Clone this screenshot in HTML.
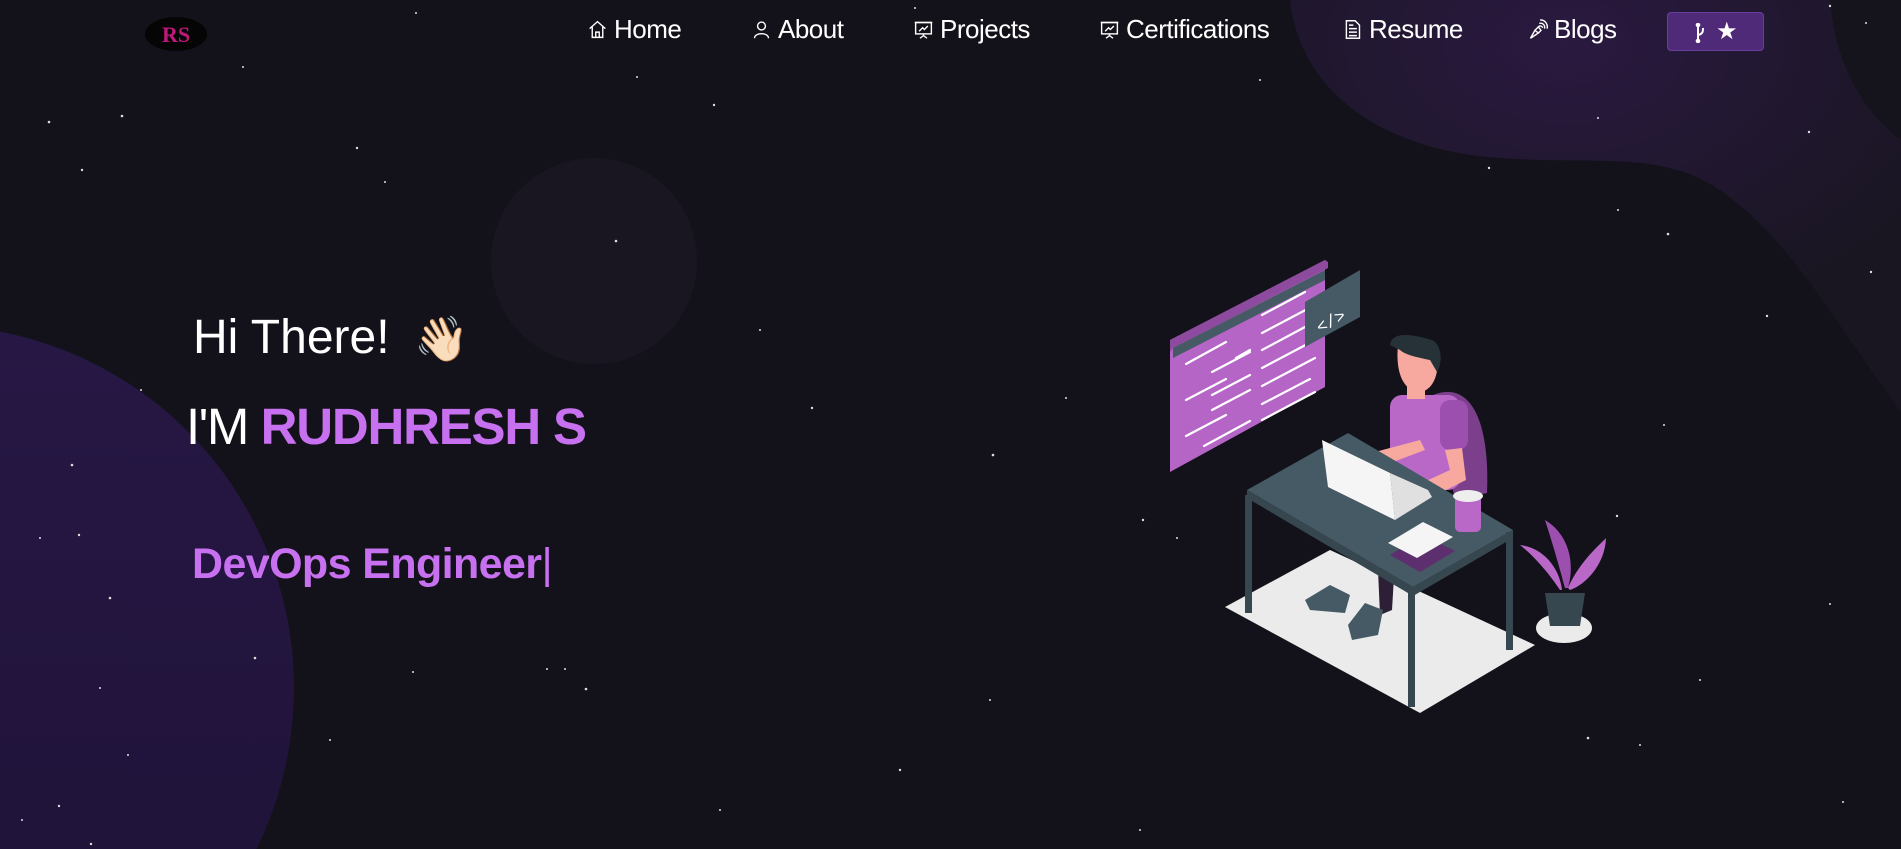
<!DOCTYPE html>
<html><head><meta charset="utf-8"><style>
*{margin:0;padding:0;box-sizing:border-box}
html,body{width:1901px;height:849px;overflow:hidden;background:#13121a;font-family:"Liberation Sans",sans-serif;position:relative}
#bg{position:absolute;left:0;top:0;display:block}
.nav{position:absolute;top:14px;color:#fff;font-size:26px;display:flex;align-items:center;gap:6px;letter-spacing:-0.5px}
.nav svg{width:21px;height:21px;fill:none;stroke:#fff;stroke-width:1.6}
.btn{position:absolute;left:1667px;top:12px;width:97px;height:39px;background:#4e2a78;border:1px solid #6a3d9c;border-radius:4px}
.t{position:absolute;white-space:nowrap}
</style></head><body>
<svg id="bg" width="1901" height="849" viewBox="0 0 1901 849">
<defs>
<radialGradient id="tr" cx="0.45" cy="0.1" r="0.7"><stop offset="0" stop-color="#2a1940"/><stop offset="1" stop-color="#191622"/></radialGradient>
<linearGradient id="lb" x1="0" y1="0" x2="0" y2="1"><stop offset="0" stop-color="#261744"/><stop offset="1" stop-color="#1e1236"/></linearGradient>
</defs>
<path d="M1290 0 C1300 90 1380 150 1500 158 C1600 165 1660 150 1720 190 C1790 240 1820 300 1901 412 L1901 0 Z" fill="url(#tr)"/>
<path d="M1830 0 C1835 60 1860 110 1901 140 L1901 0Z" fill="#15131c"/>
<circle cx="594" cy="261" r="103" fill="#191622"/>
<circle cx="-69" cy="688" r="363" fill="url(#lb)"/>
<g fill="#ddd">
<circle cx="49" cy="122" r="1.3"/><circle cx="122" cy="116" r="1.3"/><circle cx="243" cy="67" r="1"/><circle cx="385" cy="182" r="1"/><circle cx="616" cy="241" r="1.3"/><circle cx="82" cy="170" r="1.2"/><circle cx="72" cy="465" r="1.3"/><circle cx="79" cy="535" r="1.2"/><circle cx="40" cy="538" r="1"/><circle cx="110" cy="598" r="1.3"/><circle cx="141" cy="390" r="1"/><circle cx="100" cy="688" r="1"/><circle cx="128" cy="755" r="1"/><circle cx="59" cy="806" r="1.2"/><circle cx="91" cy="844" r="1.2"/><circle cx="268" cy="558" r="1"/><circle cx="255" cy="658" r="1.3"/><circle cx="586" cy="689" r="1.3"/><circle cx="565" cy="669" r="1"/><circle cx="547" cy="669" r="1"/><circle cx="413" cy="672" r="1"/><circle cx="357" cy="148" r="1.2"/><circle cx="416" cy="13" r="1"/><circle cx="637" cy="77" r="1"/><circle cx="714" cy="105" r="1.2"/><circle cx="760" cy="330" r="1"/><circle cx="812" cy="408" r="1.2"/><circle cx="993" cy="455" r="1.3"/><circle cx="1143" cy="520" r="1.2"/><circle cx="1177" cy="538" r="1"/><circle cx="1066" cy="398" r="1"/><circle cx="990" cy="700" r="1"/><circle cx="1588" cy="738" r="1.3"/><circle cx="1664" cy="425" r="1"/><circle cx="1617" cy="516" r="1.2"/><circle cx="1767" cy="316" r="1.2"/><circle cx="1668" cy="234" r="1.3"/><circle cx="1489" cy="168" r="1.2"/><circle cx="1618" cy="210" r="1"/><circle cx="1830" cy="6" r="1.2"/><circle cx="1866" cy="23" r="1"/><circle cx="1809" cy="132" r="1.2"/><circle cx="1598" cy="118" r="1"/><circle cx="1871" cy="272" r="1.2"/><circle cx="1830" cy="604" r="1"/><circle cx="1843" cy="802" r="1"/><circle cx="1640" cy="745" r="1"/><circle cx="1140" cy="830" r="1"/><circle cx="900" cy="770" r="1.2"/><circle cx="720" cy="810" r="1"/><circle cx="1700" cy="680" r="1"/><circle cx="1260" cy="80" r="1"/><circle cx="915" cy="8" r="1"/><circle cx="22" cy="820" r="1"/><circle cx="330" cy="740" r="1"/></g>
<polygon points="1225,607 1330,550 1535,645 1420,713" fill="#ebebeb"/>
<ellipse cx="1564" cy="628" rx="28" ry="15" fill="#ebebeb"/>
<polygon points="1170,340 1325,260 1325,387 1170,472" fill="#b565c6"/>
<polygon points="1170,340 1325,260 1328,262 1328,268 1173,348 1170,352" fill="#8e4a9e"/>
<polygon points="1173,348 1325,270 1325,280 1173,358" fill="#455a64"/>
<g stroke="#fff" stroke-width="2.2" stroke-linecap="round">
<line x1="1186" y1="364" x2="1226" y2="342"/><line x1="1212" y1="372" x2="1250" y2="352"/><line x1="1236" y1="358" x2="1250" y2="350"/><line x1="1186" y1="400" x2="1226" y2="379"/><line x1="1212" y1="395" x2="1250" y2="375"/><line x1="1186" y1="436" x2="1226" y2="415"/><line x1="1204" y1="446" x2="1250" y2="421"/><line x1="1262" y1="333" x2="1315" y2="305"/><line x1="1262" y1="350" x2="1305" y2="327"/><line x1="1262" y1="368" x2="1315" y2="340"/><line x1="1262" y1="386" x2="1315" y2="358"/><line x1="1262" y1="404" x2="1310" y2="379"/><line x1="1262" y1="420" x2="1315" y2="392"/><line x1="1212" y1="410" x2="1250" y2="390"/><line x1="1262" y1="315" x2="1305" y2="292"/></g>
<polygon points="1305,302 1360,270 1360,317 1305,347" fill="#455a64"/>
<text x="1315" y="327" fill="#fff" font-size="17" font-family="Liberation Mono" transform="rotate(-28 1330 320)">&lt;/&gt;</text>
<path d="M1433 395 C1470 380 1490 420 1487 493 L1455 500 Z" fill="#7b3f8c"/>
<polygon points="1360,505 1365,520 1395,560 1392,610 1380,615 1378,570 1345,540" fill="#2d1f35"/>
<path d="M1305 600 L1330 585 L1350 595 L1345 613 L1310 610Z" fill="#455a64"/>
<path d="M1348 625 L1365 603 L1383 610 L1378 635 L1352 640Z" fill="#455a64"/>
<rect x="1390" y="395" width="70" height="95" rx="12" fill="#ba68c8"/>
<rect x="1440" y="400" width="28" height="50" rx="10" fill="#9c4fae"/>
<path d="M1398 345 C1395 375 1405 392 1420 392 C1435 390 1440 370 1437 350 Z" fill="#f7a9a0"/>
<rect x="1407" y="383" width="18" height="16" fill="#f7a9a0"/>
<path d="M1390 345 C1392 330 1415 335 1432 340 C1442 345 1443 362 1437 372 L1430 360 C1420 358 1405 355 1400 350Z" fill="#263238"/>
<path d="M1375 452 L1420 440 L1425 450 L1385 465Z" fill="#f7a9a0"/>
<path d="M1400 493 L1450 470 L1445 450 L1462 448 L1466 480 L1410 508Z" fill="#f7a9a0"/>
<polygon points="1247,490 1348,433 1513,530 1413,587" fill="#455a64"/>
<polygon points="1247,490 1413,587 1513,530 1513,538 1413,596 1247,498" fill="#37474f"/>
<rect x="1245" y="495" width="7" height="118" fill="#37474f"/>
<rect x="1408" y="590" width="7" height="117" fill="#37474f"/>
<rect x="1506" y="532" width="7" height="118" fill="#37474f"/>
<polygon points="1322,440 1390,473 1395,520 1328,487" fill="#f5f5f5"/>
<polygon points="1390,473 1428,490 1432,497 1395,520" fill="#e0e0e0"/>
<rect x="1455" y="495" width="26" height="37" rx="5" fill="#ba68c8"/>
<ellipse cx="1468" cy="496" rx="15" ry="6" fill="#eee"/>
<polygon points="1390,555 1423,535 1455,551 1420,572" fill="#5e2f6e"/>
<polygon points="1388,543 1423,522 1453,537 1417,558" fill="#f5f5f5"/>
<path d="M1545 593 L1585 593 L1580 626 L1550 626Z" fill="#37474f"/>
<path d="M1560 590 C1540 560 1520 545 1520 545 C1545 548 1560 570 1562 590Z" fill="#ba68c8"/>
<path d="M1565 588 C1555 550 1545 520 1545 520 C1570 535 1575 565 1568 588Z" fill="#9c4fae"/>
<path d="M1568 588 C1580 560 1605 540 1606 538 C1605 565 1585 585 1570 590Z" fill="#ba68c8"/>
</svg>

<svg style="position:absolute;left:145px;top:16px" width="62" height="36"><ellipse cx="31" cy="18" rx="31" ry="17" fill="#050506"/><text x="31" y="26" text-anchor="middle" font-family="Liberation Serif" font-weight="bold" font-size="22" fill="#c0187a">RS</text></svg>

<div class="nav" style="left:587px"><svg viewBox="0 0 24 24"><path d="M3 11 L12 3 L21 11 M6 9 V21 H18 V9 M10 21 V15 H14 V21"/></svg>Home</div>
<div class="nav" style="left:751px"><svg viewBox="0 0 24 24"><circle cx="12" cy="8" r="4.5"/><path d="M4 22 C4 15 20 15 20 22"/></svg>About</div>
<div class="nav" style="left:913px"><svg viewBox="0 0 24 24"><rect x="3" y="4" width="18" height="13"/><path d="M2 4 H22 M7 14 L11 10 L13 12 L17 8 M12 17 V20 M8 22 L12 19 L16 22"/></svg>Projects</div>
<div class="nav" style="left:1099px"><svg viewBox="0 0 24 24"><rect x="3" y="4" width="18" height="13"/><path d="M2 4 H22 M7 14 L11 10 L13 12 L17 8 M12 17 V20 M8 22 L12 19 L16 22"/></svg>Certifications</div>
<div class="nav" style="left:1342px"><svg viewBox="0 0 24 24"><path d="M5 2 H15 L20 7 V22 H5 Z M8 11 H17 M8 15 H17 M8 19 H17 M8 7 H13"/></svg>Resume</div>
<div class="nav" style="left:1527px"><svg viewBox="0 0 24 24"><path d="M4 22 L9 13 L13 16 Z M9 13 L13 9 L16 13 L13 16 M13 9 C15 7 17 8 18 10 M14 5 C18 4 21 7 20 11 M15 1 C21 1 24 6 23 11"/></svg>Blogs</div>
<div class="btn"><svg style="position:absolute;left:27px;top:10px" width="12" height="20" viewBox="0 0 12 20" fill="none" stroke="#fff" stroke-width="2"><path d="M3 2 V18 M3 12 C8 11 8 8 8 5"/><circle cx="3" cy="2" r="1.3" fill="#fff"/><circle cx="3" cy="18" r="1.3" fill="#fff"/></svg><span style="position:absolute;left:48px;top:4px;color:#fff;font-size:24px">★</span></div>

<div class="t" style="left:193px;top:310px;font-size:48px;color:#fff">Hi There!</div>
<div class="t" style="left:414px;top:313px;font-size:44px;font-family:'Noto Color Emoji','DejaVu Sans',sans-serif">👋🏻</div>
<div class="t" style="left:186px;top:397px;font-size:51px;color:#fff;letter-spacing:-1.5px">I'M <span style="color:#c770f0;font-weight:bold;letter-spacing:-1.2px">RUDHRESH S</span></div>
<div class="t" style="left:192px;top:540px;font-size:43px;color:#c770f0;font-weight:bold;letter-spacing:-0.6px">DevOps Engineer<span style="font-weight:normal">|</span></div>
</body></html>
